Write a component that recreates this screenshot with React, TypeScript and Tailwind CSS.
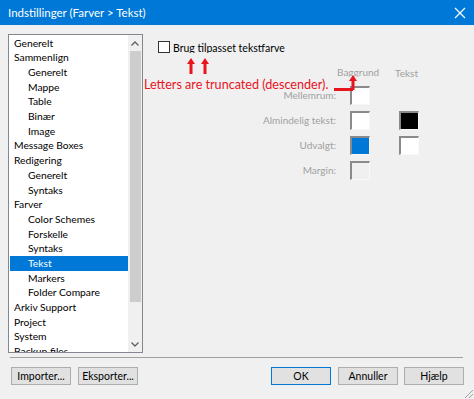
import React from 'react';

const items: { label: string; level: number; selected?: boolean }[] = [
  { label: 'Generelt', level: 0 },
  { label: 'Sammenlign', level: 0 },
  { label: 'Generelt', level: 1 },
  { label: 'Mappe', level: 1 },
  { label: 'Table', level: 1 },
  { label: 'Binær', level: 1 },
  { label: 'Image', level: 1 },
  { label: 'Message Boxes', level: 0 },
  { label: 'Redigering', level: 0 },
  { label: 'Generelt', level: 1 },
  { label: 'Syntaks', level: 1 },
  { label: 'Farver', level: 0 },
  { label: 'Color Schemes', level: 1 },
  { label: 'Forskelle', level: 1 },
  { label: 'Syntaks', level: 1 },
  { label: 'Tekst', level: 1, selected: true },
  { label: 'Markers', level: 1 },
  { label: 'Folder Compare', level: 1 },
  { label: 'Arkiv Support', level: 0 },
  { label: 'Project', level: 0 },
  { label: 'System', level: 0 },
  { label: 'Backup files', level: 0 },
];

// sunken colour well, like the old win32 colour buttons
function Swatch({ color }: { color: string }) {
  return (
    <div className="w-[20px] h-[19px] border-t-2 border-l-2 border-r border-b border-t-[#8a8a8a] border-l-[#8a8a8a] border-r-[#f8f8f8] border-b-[#f8f8f8]">
      <div className="w-full h-full" style={{ backgroundColor: color }} />
    </div>
  );
}

// thick red annotation arrow pointing up
function RedArrow({ h = 16 }: { h?: number }) {
  return (
    <svg width="8" height={h} viewBox={`0 0 8 ${h}`}>
      <path d={`M4 0 L8 6 L5.5 6 L5.5 ${h} L2.5 ${h} L2.5 6 L0 6 Z`} fill="#e8141e" />
    </svg>
  );
}

function Button({ label, primary }: { label: string; primary?: boolean }) {
  return (
    <button
      className={`w-[60px] h-[18px] bg-[#e1e1e1] border text-[10.5px] leading-none text-black ${
        primary ? 'border-[#0078d7]' : 'border-[#adadad]'
      }`}
    >
      {label}
    </button>
  );
}

export default function App() {
  return (
    <div className="w-[474px] h-[399px] bg-[#f0f0f0] flex flex-col font-['Lato',sans-serif] text-[10px] text-black overflow-hidden">
      {/* Title bar */}
      <div className="h-[25px] bg-[#0078d7] flex items-center justify-between pl-[8px] pr-[8px] text-white text-[11.5px] shrink-0">
        <span>Indstillinger (Farver &gt; Tekst)</span>
        <svg width="12" height="12" viewBox="0 0 12 12">
          <path d="M1 1 L11 11 M11 1 L1 11" stroke="white" strokeWidth="1.2" />
        </svg>
      </div>

      <div className="flex pt-[9px] pl-[8px]">
        {/* Tree list */}
        <div className="w-[135px] h-[319px] border border-[#828790] bg-white flex shrink-0 text-[10.3px]">
          <div className="flex-1 pt-[1px] overflow-hidden">
            {items.map((item, i) => (
              <div
                key={i}
                className={`h-[14.7px] flex items-center ml-[1px] whitespace-nowrap ${
                  item.selected ? 'bg-[#0078d7] text-white' : ''
                } ${item.level === 1 ? 'pl-[18px]' : 'pl-[4px]'}`}
              >
                {item.label}
              </div>
            ))}
          </div>
          <div className="w-[14px] bg-[#f0f0f0] flex flex-col items-center">
            <div className="h-[16px] flex items-center justify-center">
              <svg width="8" height="5" viewBox="0 0 8 5">
                <path d="M0.5 4.5 L4 1 L7.5 4.5" stroke="#606060" strokeWidth="1.3" fill="none" />
              </svg>
            </div>
            <div className="w-[11px] h-[251px] bg-[#cdcdcd]" />
            <div className="flex-1" />
            <div className="h-[16px] flex items-center justify-center">
              <svg width="8" height="5" viewBox="0 0 8 5">
                <path d="M0.5 0.5 L4 4 L7.5 0.5" stroke="#606060" strokeWidth="1.3" fill="none" />
              </svg>
            </div>
          </div>
        </div>

        {/* Right panel */}
        <div className="relative flex-1 pl-[15px] pt-[7px]">
          <div className="flex items-center gap-[3px]">
            <div className="w-[12px] h-[12px] border border-[#333333] bg-white" />
            <span className="h-[12px] overflow-hidden leading-[14px] text-[10.5px]">
              <span className="underline">B</span>rug tilpasset tekstfarve
            </span>
          </div>

          <div className="flex mt-[13px] pl-[179px] text-[#a0a0a0]">
            <span className="w-[58px] h-[11px] overflow-hidden leading-[13px]">Baggrund</span>
            <span>Tekst</span>
          </div>

          <div className="grid grid-cols-[192px_20px_29px_20px] gap-y-[6px] mt-[5px] items-center text-[#a0a0a0]">
            <span className="text-right pr-[14px]">Mellemrum:</span>
            <Swatch color="#ffffff" />
            <span />
            <span />
            <span className="text-right pr-[14px]">Almindelig tekst:</span>
            <Swatch color="#ffffff" />
            <span />
            <Swatch color="#000000" />
            <span className="text-right pr-[14px]">Udvalgt:</span>
            <Swatch color="#0078d7" />
            <span />
            <Swatch color="#ffffff" />
            <span className="text-right pr-[14px]">Margin:</span>
            <Swatch color="#f0f0f0" />
            <span />
            <span />
          </div>

          {/* Red annotations laid over the dialog */}
          <div className="absolute left-[44px] top-[24px] flex gap-[6px]">
            <RedArrow />
            <RedArrow />
          </div>
          <div className="absolute left-[1px] top-[45px] text-[#e8141e] text-[12.6px] leading-none whitespace-nowrap">
            Letters are truncated (descender).
          </div>
          <div className="absolute left-[206px] top-[41px]">
            <RedArrow h={15} />
          </div>
          <div className="absolute left-[191px] top-[54px] w-[19px] h-[3px] bg-[#e8141e]" />
        </div>
      </div>

      <div className="mt-[4px] ml-[10px] w-[453px] border-t border-[#a0a0a0]" />

      <div className="flex items-center mt-[9px] pl-[11px] pr-[10px]">
        <Button label="Importer..." />
        <div className="w-[7px]" />
        <Button label="Eksporter..." />
        <div className="flex-1" />
        <Button label="OK" primary />
        <div className="w-[7px]" />
        <Button label="Annuller" />
        <div className="w-[6px]" />
        <Button label="Hjælp" />
      </div>

      <div className="flex justify-end mt-auto">
        <svg width="12" height="12" viewBox="0 0 12 12">
          <path d="M11 3 L3 11 M11 7 L7 11" stroke="#a0a0a0" strokeWidth="1" />
        </svg>
      </div>
    </div>
  );
}
